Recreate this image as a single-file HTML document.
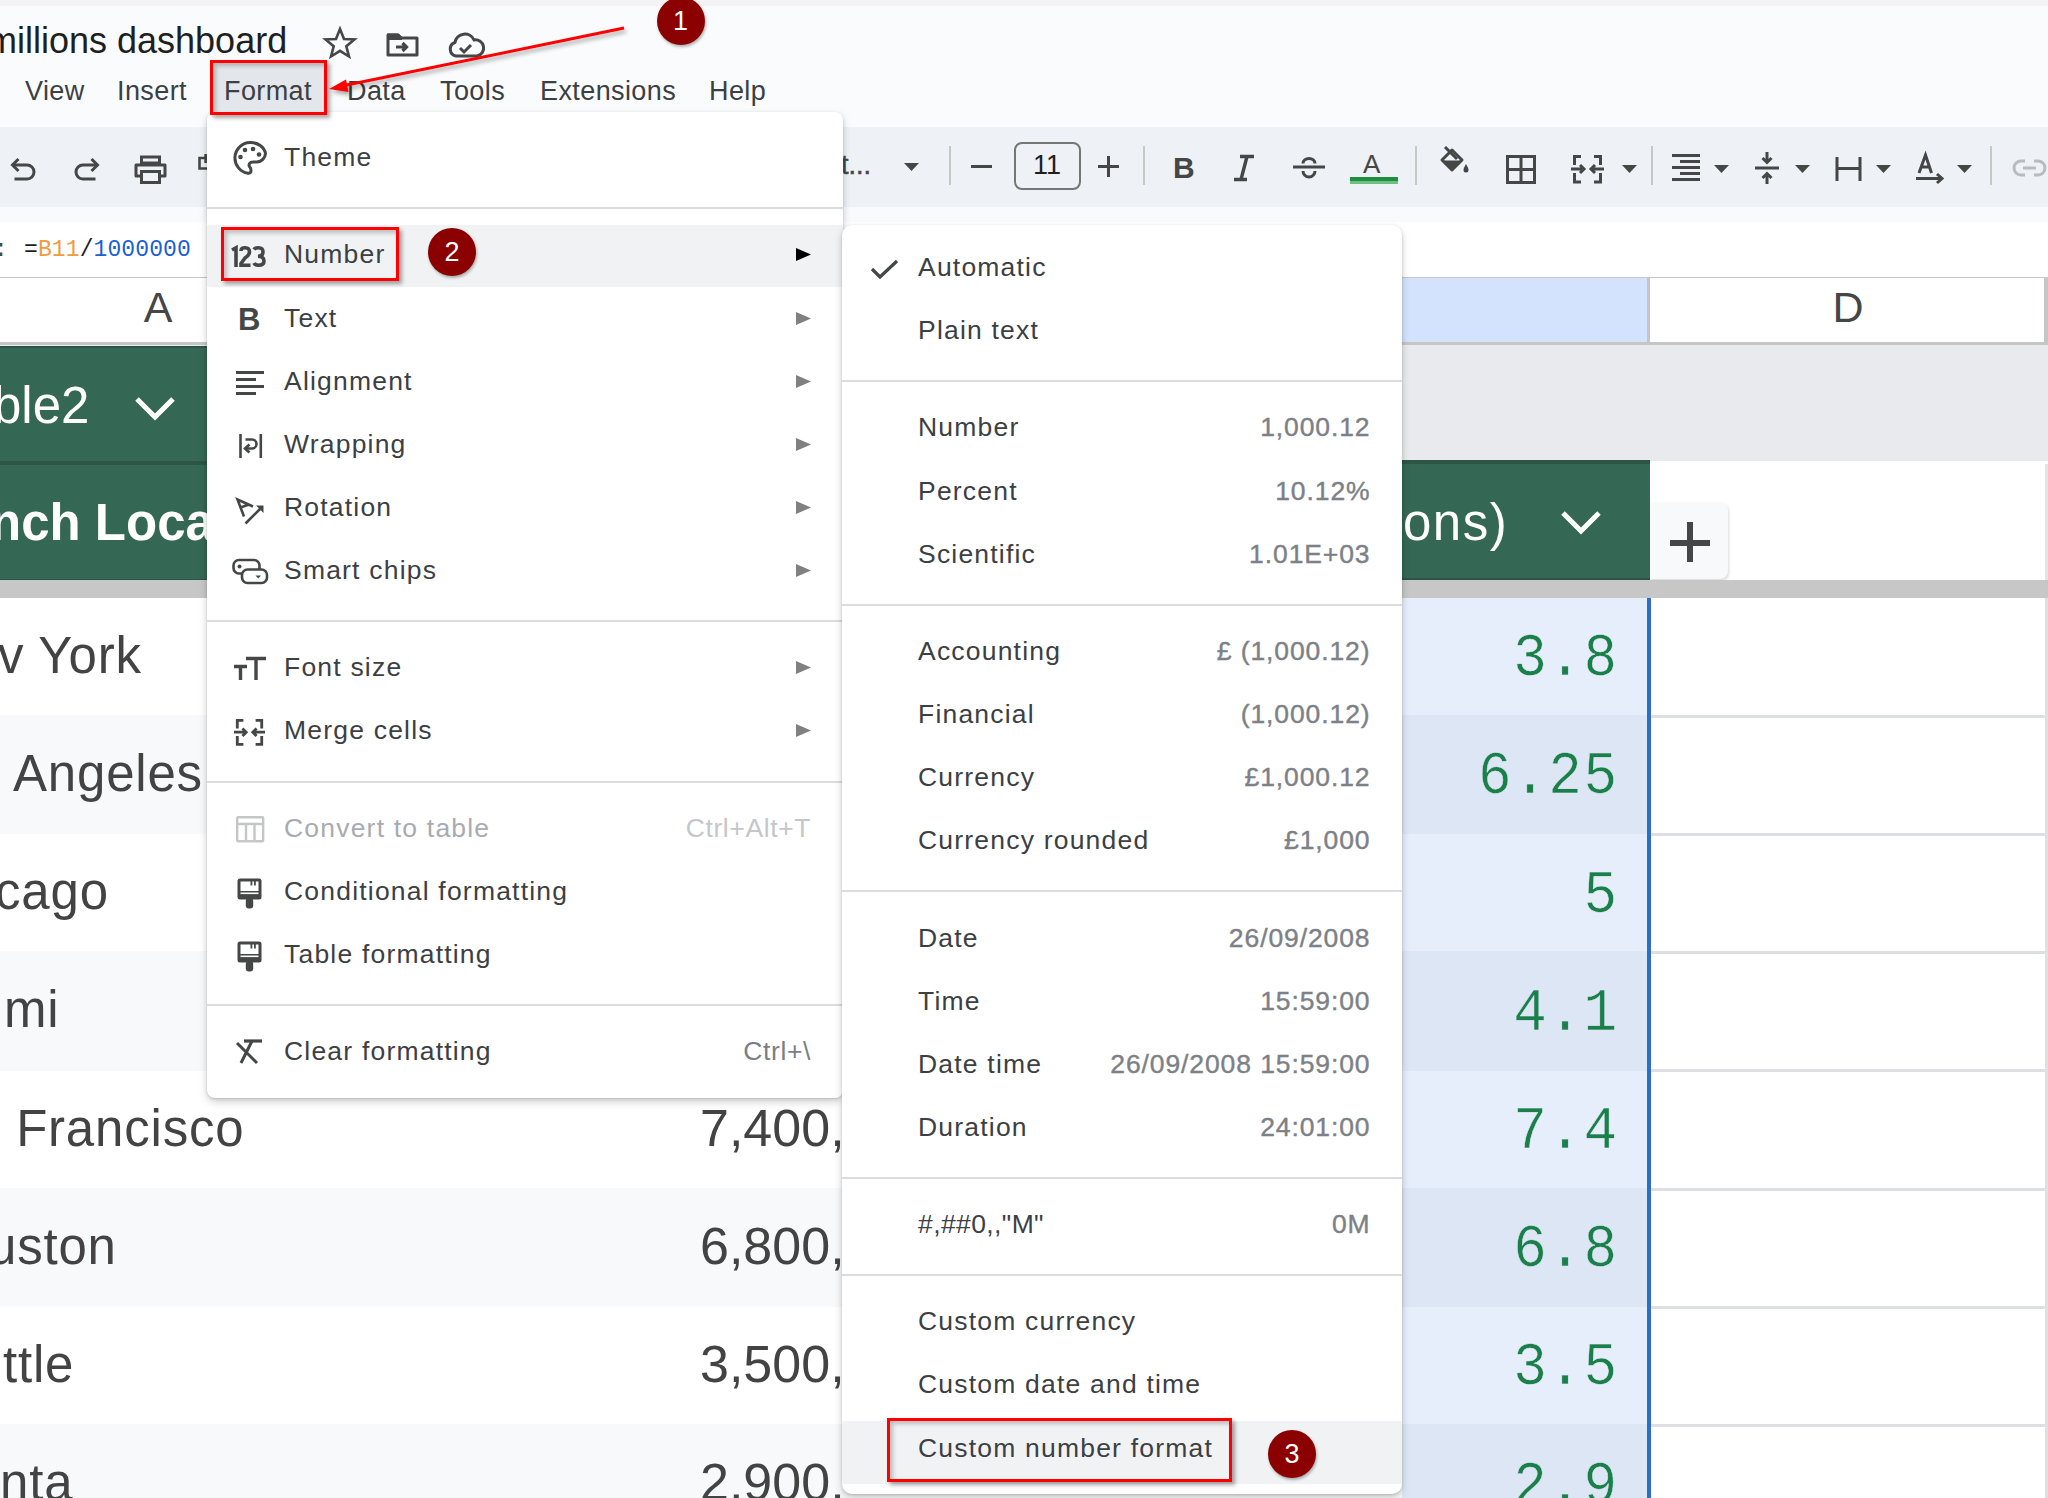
<!DOCTYPE html>
<html><head><meta charset="utf-8"><style>
html,body{margin:0;padding:0;width:2048px;height:1498px;overflow:hidden;background:#ffffff;font-family:'Liberation Sans', sans-serif;}
.r{position:absolute;box-sizing:border-box;}
svg.r{box-sizing:content-box;overflow:visible}
.t{position:absolute;line-height:1;white-space:nowrap;}
</style></head><body>
<div class="r" style="left:0px;top:0px;width:2048px;height:127px;background:#f9fbfd;"></div>
<div class="r" style="left:0px;top:0px;width:2048px;height:6px;background:#f3f3f6;"></div>
<div class="t" style="left:-13px;top:22.5px;font-size:36px;color:#1f1f1f;font-weight:400;letter-spacing:0px;font-family:'Liberation Sans', sans-serif;">millions dashboard</div>
<svg class="r" style="left:323px;top:26px;" width="34" height="32" viewBox="0 0 34 32"><path d="M17 3 L21 13 L31.5 13.5 L23.3 20.3 L26 30.5 L17 24.8 L8 30.5 L10.7 20.3 L2.5 13.5 L13 13 Z" fill="none" stroke="#444746" stroke-width="2.6" stroke-linejoin="miter"/></svg>
<svg class="r" style="left:386px;top:32px;" width="34" height="26" viewBox="0 0 34 26"><path d="M2 3 L12 3 L15 6 L31 6 L31 23 L2 23 Z" fill="none" stroke="#444746" stroke-width="3" stroke-linejoin="round"/><path d="M1 1.5 L12.5 1.5 L16 5 L16 8 L1 8 Z" fill="#444746"/><path d="M10 15 L20 15 M16.5 11 L20.5 15 L16.5 19" fill="none" stroke="#444746" stroke-width="3.2"/></svg>
<svg class="r" style="left:447px;top:32px;" width="38" height="27" viewBox="0 0 38 27"><path d="M9 24 A7 7 0 0 1 8 10.5 A10 10 0 0 1 27 8 A8 8 0 0 1 30 24 Z" fill="none" stroke="#444746" stroke-width="3" stroke-linejoin="round"/><path d="M13 16 L17 20 L24 13" fill="none" stroke="#444746" stroke-width="3"/></svg>
<div class="t" style="left:25px;top:78.1px;font-size:27px;color:#3c4043;font-weight:400;letter-spacing:0.4px;font-family:'Liberation Sans', sans-serif;">View</div>
<div class="t" style="left:117px;top:78.1px;font-size:27px;color:#3c4043;font-weight:400;letter-spacing:0.4px;font-family:'Liberation Sans', sans-serif;">Insert</div>
<div class="t" style="left:224px;top:78.1px;font-size:27px;color:#3c4043;font-weight:400;letter-spacing:0.4px;font-family:'Liberation Sans', sans-serif;">Format</div>
<div class="t" style="left:347px;top:78.1px;font-size:27px;color:#3c4043;font-weight:400;letter-spacing:0.4px;font-family:'Liberation Sans', sans-serif;">Data</div>
<div class="t" style="left:440px;top:78.1px;font-size:27px;color:#3c4043;font-weight:400;letter-spacing:0.4px;font-family:'Liberation Sans', sans-serif;">Tools</div>
<div class="t" style="left:540px;top:78.1px;font-size:27px;color:#3c4043;font-weight:400;letter-spacing:0.4px;font-family:'Liberation Sans', sans-serif;">Extensions</div>
<div class="t" style="left:709px;top:78.1px;font-size:27px;color:#3c4043;font-weight:400;letter-spacing:0.4px;font-family:'Liberation Sans', sans-serif;">Help</div>
<div class="r" style="left:0px;top:127px;width:2048px;height:80px;background:#eef1f6;"></div>
<div class="r" style="left:0px;top:207px;width:2048px;height:15px;background:#f8fafd;"></div>
<svg class="r" style="left:10px;top:157px;" width="27" height="25" viewBox="0 0 27 25"><path d="M8.5 2 L2.5 8 L8.5 14" fill="none" stroke="#444746" stroke-width="3"/><path d="M3 8 L17 8 A7 7 0 0 1 17 22 L4.5 22" fill="none" stroke="#444746" stroke-width="3"/></svg>
<svg class="r" style="left:73px;top:157px;" width="27" height="25" viewBox="0 0 27 25"><path d="M18.5 2 L24.5 8 L18.5 14" fill="none" stroke="#444746" stroke-width="3"/><path d="M24 8 L10 8 A7 7 0 0 0 10 22 L22.5 22" fill="none" stroke="#444746" stroke-width="3"/></svg>
<svg class="r" style="left:134px;top:155px;" width="33" height="30" viewBox="0 0 33 30"><rect x="7.5" y="2" width="18" height="6" fill="none" stroke="#444746" stroke-width="3"/><path d="M7 21 L2 21 L2 10 L31 10 L31 21 L26 21" fill="none" stroke="#444746" stroke-width="3" stroke-linejoin="round"/><rect x="7.5" y="16.5" width="18" height="11" fill="none" stroke="#444746" stroke-width="3"/></svg>
<svg class="r" style="left:195px;top:150px;" width="14" height="22" viewBox="0 0 14 22"><path d="M12 8 L4.5 8 L4.5 18.5 L12 18.5" fill="none" stroke="#444746" stroke-width="2.6"/><rect x="9.3" y="4" width="2.6" height="9" fill="#444746"/></svg>
<div class="t" style="left:841px;top:152.1px;font-size:27px;color:#444746;font-weight:400;letter-spacing:0px;font-family:'Liberation Sans', sans-serif;-webkit-text-stroke:0.5px #444746">t...</div>
<svg class="r" style="left:904px;top:163px;" width="15" height="8" viewBox="0 0 15 8"><path d="M0 0 L15 0 L7.5 8 Z" fill="#444746"/></svg>
<div class="r" style="left:949px;top:146px;width:2px;height:39px;background:#c7c7c7;"></div>
<div class="r" style="left:971px;top:165px;width:21px;height:3px;background:#444746;"></div>
<div class="r" style="left:1014px;top:142px;width:67px;height:48px;border:2px solid #747775;border-radius:8px;"></div>
<div class="t" style="left:1047px;top:152.1px;font-size:27px;color:#1f1f1f;font-weight:400;letter-spacing:0px;font-family:'Liberation Sans', sans-serif;width:0;display:flex;justify-content:center;">11</div>
<div class="r" style="left:1098px;top:165px;width:21px;height:3px;background:#444746;"></div>
<div class="r" style="left:1107px;top:156px;width:3px;height:21px;background:#444746;"></div>
<div class="r" style="left:1143px;top:146px;width:2px;height:39px;background:#c7c7c7;"></div>
<div class="t" style="left:1173px;top:153.1px;font-size:30px;color:#444746;font-weight:700;letter-spacing:0px;font-family:'Liberation Sans', sans-serif;">B</div>
<svg class="r" style="left:1232px;top:155px;" width="24" height="26" viewBox="0 0 24 26"><path d="M8 1.5 L22 1.5 M2 24.5 L15 24.5 M15 1.5 L9 24.5" fill="none" stroke="#444746" stroke-width="3.4"/></svg>
<svg class="r" style="left:1292px;top:156px;" width="34" height="25" viewBox="0 0 34 25"><path d="M1 11 L33 11" stroke="#444746" stroke-width="3"/><path d="M11 7.5 A6 5 0 0 1 23 7.5" fill="none" stroke="#444746" stroke-width="3"/><path d="M11 15 A6 6 0 0 0 23 15" fill="none" stroke="#444746" stroke-width="3"/></svg>
<div class="t" style="left:1363px;top:150.5px;font-size:26px;color:#444746;font-weight:400;letter-spacing:0px;font-family:'Liberation Sans', sans-serif;">A</div>
<div class="r" style="left:1350px;top:177px;width:48px;height:4px;background:#1e8e3e;"></div>
<div class="r" style="left:1350px;top:181px;width:48px;height:3px;background:#6fbf85;"></div>
<div class="r" style="left:1415px;top:146px;width:2px;height:39px;background:#c7c7c7;"></div>
<svg class="r" style="left:1440px;top:145px;" width="32" height="31" viewBox="0 0 32 31"><path d="M5 2 L17 14" stroke="#444746" stroke-width="3"/><path d="M2 15 L12 5 L22 15 L12 25 Z" fill="none" stroke="#444746" stroke-width="3" stroke-linejoin="round"/><path d="M3 15.5 L21 15.5 L12 25 Z" fill="#444746"/><path d="M26 19 Q23.5 23 23.5 25 A2.5 2.5 0 0 0 28.5 25 Q28.5 23 26 19 Z" fill="#444746"/></svg>
<svg class="r" style="left:1506px;top:155px;" width="30" height="29" viewBox="0 0 30 29"><rect x="1.5" y="1.5" width="27" height="26" fill="none" stroke="#444746" stroke-width="3"/><path d="M15 1.5 L15 27.5 M1.5 14.5 L28.5 14.5" stroke="#444746" stroke-width="3"/></svg>
<svg class="r" style="left:1571px;top:155px;" width="34" height="30" viewBox="0 0 34 30"><g transform="scale(1.0)" fill="none" stroke="#444746" stroke-width="3"><path d="M10 1.5 L3.5 1.5 L3.5 10 M3.5 18 L3.5 27 L10 27 M23 1.5 L29.5 1.5 L29.5 10 M29.5 18 L29.5 27 L23 27"/><path d="M0 14 L13 14 M9 10 L13 14 L9 18 M33 14 L20 14 M24 10 L20 14 L24 18"/></g></svg>
<svg class="r" style="left:1622px;top:165px;" width="15" height="8" viewBox="0 0 15 8"><path d="M0 0 L15 0 L7.5 8 Z" fill="#444746"/></svg>
<div class="r" style="left:1651px;top:146px;width:2px;height:39px;background:#c7c7c7;"></div>
<svg class="r" style="left:1672px;top:154px;" width="28" height="29" viewBox="0 0 28 29"><rect x="0" y="0" width="28" height="3" fill="#444746"/><rect x="8" y="6" width="20" height="3" fill="#444746"/><rect x="0" y="12" width="28" height="3" fill="#444746"/><rect x="8" y="18" width="20" height="3" fill="#444746"/><rect x="0" y="24" width="28" height="3" fill="#444746"/></svg>
<svg class="r" style="left:1714px;top:165px;" width="15" height="8" viewBox="0 0 15 8"><path d="M0 0 L15 0 L7.5 8 Z" fill="#444746"/></svg>
<svg class="r" style="left:1754px;top:151px;" width="26" height="33" viewBox="0 0 26 33"><path d="M1 17 L25 17" stroke="#444746" stroke-width="3"/><path d="M13 1 L13 11 M8.5 7 L13 11.5 L17.5 7" fill="none" stroke="#444746" stroke-width="3"/><path d="M13 33 L13 23 M8.5 27 L13 22.5 L17.5 27" fill="none" stroke="#444746" stroke-width="3"/></svg>
<svg class="r" style="left:1795px;top:165px;" width="15" height="8" viewBox="0 0 15 8"><path d="M0 0 L15 0 L7.5 8 Z" fill="#444746"/></svg>
<svg class="r" style="left:1835px;top:156px;" width="27" height="26" viewBox="0 0 27 26"><path d="M2 1 L2 25 M25 1 L25 25 M2 12.5 L25 12.5" stroke="#444746" stroke-width="3"/></svg>
<svg class="r" style="left:1876px;top:165px;" width="15" height="8" viewBox="0 0 15 8"><path d="M0 0 L15 0 L7.5 8 Z" fill="#444746"/></svg>
<svg class="r" style="left:1915px;top:153px;" width="30" height="30" viewBox="0 0 30 30"><path d="M4 20 L10.5 2 L16.5 20 M6.5 14 L14.5 14" fill="none" stroke="#444746" stroke-width="3"/><path d="M1 25.5 L26 25.5 M22 21 L27 25.5 L22 30" fill="none" stroke="#444746" stroke-width="3"/></svg>
<svg class="r" style="left:1957px;top:165px;" width="15" height="8" viewBox="0 0 15 8"><path d="M0 0 L15 0 L7.5 8 Z" fill="#444746"/></svg>
<div class="r" style="left:1990px;top:146px;width:2px;height:39px;background:#c7c7c7;"></div>
<svg class="r" style="left:2013px;top:159px;" width="35" height="19" viewBox="0 0 35 19"><path d="M12 2 L8 2 A7 7 0 0 0 8 16 L12 16 M21 2 L25 2 A7 7 0 0 1 25 16 L21 16 M10 9 L23 9" fill="none" stroke="#b9bbbe" stroke-width="3"/></svg>
<div class="r" style="left:0px;top:222px;width:2048px;height:55px;background:#ffffff;"></div>
<div class="r" style="left:0px;top:277px;width:2048px;height:1px;background:#c4c7c5;"></div>
<div class="t" style="left:-6px;top:239.4px;font-size:23px;color:#444746;font-weight:400;letter-spacing:0px;font-family:'Liberation Mono', monospace;">:</div>
<div class="t" style="left:24px;top:239.4px;font-size:23px;font-family:'Liberation Mono', monospace;color:#1f1f1f;letter-spacing:0.1px">=<span style="color:#f29b3c">B11</span>/<span style="color:#1a5fd6">1000000</span></div>
<div class="r" style="left:0px;top:278px;width:2048px;height:65px;background:#ffffff;"></div>
<div class="r" style="left:1402px;top:278px;width:246px;height:65px;background:#d3e3fd;"></div>
<div class="r" style="left:1647px;top:278px;width:3px;height:65px;background:#c4c7c5;"></div>
<div class="r" style="left:2044px;top:278px;width:4px;height:65px;background:#c4c7c5;"></div>
<div class="r" style="left:0px;top:342px;width:2048px;height:3px;background:#c4c7c5;"></div>
<div class="t" style="left:158px;top:286.1px;font-size:43px;color:#444746;font-weight:400;letter-spacing:0px;font-family:'Liberation Sans', sans-serif;width:0;display:flex;justify-content:center;">A</div>
<div class="t" style="left:1848px;top:286.1px;font-size:43px;color:#444746;font-weight:400;letter-spacing:0px;font-family:'Liberation Sans', sans-serif;width:0;display:flex;justify-content:center;">D</div>
<div class="r" style="left:0px;top:345px;width:2048px;height:116px;background:#e8eaed;"></div>
<div class="r" style="left:0px;top:346px;width:207px;height:115px;background:#356854;"></div>
<div class="r" style="left:0px;top:346px;width:207px;height:2px;background:#2c5545;"></div>
<div class="t" style="left:-7px;top:379.8px;font-size:51px;color:#ffffff;font-weight:400;letter-spacing:0px;font-family:'Liberation Sans', sans-serif;">ble2</div>
<svg class="r" style="left:134px;top:396px;" width="44" height="27" viewBox="0 0 44 27"><path d="M3 3 L21 21 L39 3" fill="none" stroke="#ffffff" stroke-width="5"/></svg>
<div class="r" style="left:0px;top:461px;width:2048px;height:117px;background:#ffffff;"></div>
<div class="r" style="left:0px;top:461px;width:207px;height:4px;background:#2c5545;"></div>
<div class="r" style="left:0px;top:465px;width:207px;height:115px;background:#356854;"></div>
<div class="r" style="left:0px;top:579px;width:207px;height:3px;background:#2c5545;"></div>
<div class="t" style="left:-10px;top:496.8px;font-size:51px;color:#ffffff;font-weight:700;letter-spacing:0px;font-family:'Liberation Sans', sans-serif;">nch Loca</div>
<div class="r" style="left:1402px;top:461px;width:248px;height:119px;background:#356854;"></div>
<div class="r" style="left:1402px;top:578px;width:248px;height:4px;background:#2c5545;"></div>
<div class="r" style="left:1402px;top:460px;width:248px;height:4px;background:#2c5545;"></div>
<div class="t" style="left:1403px;top:496.8px;font-size:51px;color:#ffffff;font-weight:400;letter-spacing:1.5px;font-family:'Liberation Sans', sans-serif;">ons)</div>
<svg class="r" style="left:1560px;top:510px;" width="44" height="27" viewBox="0 0 44 27"><path d="M3 3 L21 21 L39 3" fill="none" stroke="#ffffff" stroke-width="5"/></svg>
<div class="r" style="left:1650px;top:502px;width:78px;height:77px;background:#f8f9fb;border-radius:0 8px 8px 0;box-shadow:1px 2px 3px rgba(0,0,0,0.15)"></div>
<div class="r" style="left:1670px;top:539.5px;width:40px;height:6px;background:#444746;"></div>
<div class="r" style="left:1687px;top:522px;width:6px;height:40px;background:#444746;"></div>
<div class="r" style="left:0px;top:580px;width:2048px;height:18px;background:#c7c7c7;"></div>
<div class="r" style="left:0px;top:598.0px;width:1648px;height:119.2px;background:#ffffff;"></div>
<div class="r" style="left:1402px;top:598.0px;width:246px;height:119.2px;background:#e6eefb;"></div>
<div class="r" style="left:0px;top:714.7px;width:1648px;height:121.2px;background:#f8f9fa;"></div>
<div class="r" style="left:1402px;top:714.7px;width:246px;height:121.2px;background:#dce6f5;"></div>
<div class="r" style="left:0px;top:834.4px;width:1648px;height:119.2px;background:#ffffff;"></div>
<div class="r" style="left:1402px;top:834.4px;width:246px;height:119.2px;background:#e6eefb;"></div>
<div class="r" style="left:0px;top:951.1px;width:1648px;height:121.2px;background:#f8f9fa;"></div>
<div class="r" style="left:1402px;top:951.1px;width:246px;height:121.2px;background:#dce6f5;"></div>
<div class="r" style="left:0px;top:1070.8px;width:1648px;height:119.2px;background:#ffffff;"></div>
<div class="r" style="left:1402px;top:1070.8px;width:246px;height:119.2px;background:#e6eefb;"></div>
<div class="r" style="left:0px;top:1187.5px;width:1648px;height:121.2px;background:#f8f9fa;"></div>
<div class="r" style="left:1402px;top:1187.5px;width:246px;height:121.2px;background:#dce6f5;"></div>
<div class="r" style="left:0px;top:1307.2px;width:1648px;height:119.2px;background:#ffffff;"></div>
<div class="r" style="left:1402px;top:1307.2px;width:246px;height:119.2px;background:#e6eefb;"></div>
<div class="r" style="left:0px;top:1423.9px;width:1648px;height:121.2px;background:#f8f9fa;"></div>
<div class="r" style="left:1402px;top:1423.9px;width:246px;height:121.2px;background:#dce6f5;"></div>
<div class="r" style="left:1650px;top:598.0px;width:396px;height:119.2px;background:#ffffff;"></div>
<div class="r" style="left:1650px;top:716.2px;width:396px;height:119.2px;background:#ffffff;"></div>
<div class="r" style="left:1650px;top:834.4px;width:396px;height:119.2px;background:#ffffff;"></div>
<div class="r" style="left:1650px;top:952.6px;width:396px;height:119.2px;background:#ffffff;"></div>
<div class="r" style="left:1650px;top:1070.8px;width:396px;height:119.2px;background:#ffffff;"></div>
<div class="r" style="left:1650px;top:1189.0px;width:396px;height:119.2px;background:#ffffff;"></div>
<div class="r" style="left:1650px;top:1307.2px;width:396px;height:119.2px;background:#ffffff;"></div>
<div class="r" style="left:1650px;top:1425.4px;width:396px;height:119.2px;background:#ffffff;"></div>
<div class="r" style="left:1650px;top:714.7px;width:396px;height:3px;background:#dedfe0;"></div>
<div class="t" style="left:-2px;top:629.8px;font-size:51px;color:#434343;font-weight:400;letter-spacing:0.8px;font-family:'Liberation Sans', sans-serif;">v York</div>
<div class="t" style="right:429.5px;text-align:right;top:632.1px;font-size:56px;color:#1b7f4a;font-weight:400;letter-spacing:0px;font-family:'Liberation Mono', monospace;letter-spacing:1.5px;transform:scaleY(1.09);transform-origin:50% 43px;-webkit-text-stroke:0.5px #e6eefb">3.8</div>
<div class="r" style="left:1650px;top:832.9000000000001px;width:396px;height:3px;background:#dedfe0;"></div>
<div class="t" style="left:13px;top:748.0px;font-size:51px;color:#434343;font-weight:400;letter-spacing:0.8px;font-family:'Liberation Sans', sans-serif;">Angeles</div>
<div class="t" style="right:429.5px;text-align:right;top:750.3px;font-size:56px;color:#1b7f4a;font-weight:400;letter-spacing:0px;font-family:'Liberation Mono', monospace;letter-spacing:1.5px;transform:scaleY(1.09);transform-origin:50% 43px;-webkit-text-stroke:0.5px #dce6f5">6.25</div>
<div class="r" style="left:1650px;top:951.1px;width:396px;height:3px;background:#dedfe0;"></div>
<div class="t" style="left:-5px;top:866.2px;font-size:51px;color:#434343;font-weight:400;letter-spacing:0.8px;font-family:'Liberation Sans', sans-serif;">cago</div>
<div class="t" style="right:429.5px;text-align:right;top:868.5px;font-size:56px;color:#1b7f4a;font-weight:400;letter-spacing:0px;font-family:'Liberation Mono', monospace;letter-spacing:1.5px;transform:scaleY(1.09);transform-origin:50% 43px;-webkit-text-stroke:0.5px #e6eefb">5</div>
<div class="r" style="left:1650px;top:1069.3px;width:396px;height:3px;background:#dedfe0;"></div>
<div class="t" style="left:4px;top:984.4px;font-size:51px;color:#434343;font-weight:400;letter-spacing:0.8px;font-family:'Liberation Sans', sans-serif;">mi</div>
<div class="t" style="right:429.5px;text-align:right;top:986.7px;font-size:56px;color:#1b7f4a;font-weight:400;letter-spacing:0px;font-family:'Liberation Mono', monospace;letter-spacing:1.5px;transform:scaleY(1.09);transform-origin:50% 43px;-webkit-text-stroke:0.5px #dce6f5">4.1</div>
<div class="r" style="left:1650px;top:1187.5px;width:396px;height:3px;background:#dedfe0;"></div>
<div class="t" style="left:-28px;top:1102.6px;font-size:51px;color:#434343;font-weight:400;letter-spacing:0.8px;font-family:'Liberation Sans', sans-serif;">n Francisco</div>
<div class="t" style="left:700px;top:1101.8px;font-size:52px;color:#434343;font-weight:400;letter-spacing:0px;font-family:'Liberation Sans', sans-serif;">7,400,</div>
<div class="t" style="right:429.5px;text-align:right;top:1104.9px;font-size:56px;color:#1b7f4a;font-weight:400;letter-spacing:0px;font-family:'Liberation Mono', monospace;letter-spacing:1.5px;transform:scaleY(1.09);transform-origin:50% 43px;-webkit-text-stroke:0.5px #e6eefb">7.4</div>
<div class="r" style="left:1650px;top:1305.7px;width:396px;height:3px;background:#dedfe0;"></div>
<div class="t" style="left:-12px;top:1220.8px;font-size:51px;color:#434343;font-weight:400;letter-spacing:0.8px;font-family:'Liberation Sans', sans-serif;">uston</div>
<div class="t" style="left:700px;top:1220.0px;font-size:52px;color:#434343;font-weight:400;letter-spacing:0px;font-family:'Liberation Sans', sans-serif;">6,800,</div>
<div class="t" style="right:429.5px;text-align:right;top:1223.1px;font-size:56px;color:#1b7f4a;font-weight:400;letter-spacing:0px;font-family:'Liberation Mono', monospace;letter-spacing:1.5px;transform:scaleY(1.09);transform-origin:50% 43px;-webkit-text-stroke:0.5px #dce6f5">6.8</div>
<div class="r" style="left:1650px;top:1423.9px;width:396px;height:3px;background:#dedfe0;"></div>
<div class="t" style="left:3px;top:1339.0px;font-size:51px;color:#434343;font-weight:400;letter-spacing:0.8px;font-family:'Liberation Sans', sans-serif;">ttle</div>
<div class="t" style="left:700px;top:1338.2px;font-size:52px;color:#434343;font-weight:400;letter-spacing:0px;font-family:'Liberation Sans', sans-serif;">3,500,</div>
<div class="t" style="right:429.5px;text-align:right;top:1341.3px;font-size:56px;color:#1b7f4a;font-weight:400;letter-spacing:0px;font-family:'Liberation Mono', monospace;letter-spacing:1.5px;transform:scaleY(1.09);transform-origin:50% 43px;-webkit-text-stroke:0.5px #e6eefb">3.5</div>
<div class="r" style="left:1650px;top:1542.1000000000001px;width:396px;height:3px;background:#dedfe0;"></div>
<div class="t" style="left:0px;top:1457.2px;font-size:51px;color:#434343;font-weight:400;letter-spacing:0.8px;font-family:'Liberation Sans', sans-serif;">nta</div>
<div class="t" style="left:700px;top:1456.4px;font-size:52px;color:#434343;font-weight:400;letter-spacing:0px;font-family:'Liberation Sans', sans-serif;">2,900,</div>
<div class="t" style="right:429.5px;text-align:right;top:1459.5px;font-size:56px;color:#1b7f4a;font-weight:400;letter-spacing:0px;font-family:'Liberation Mono', monospace;letter-spacing:1.5px;transform:scaleY(1.09);transform-origin:50% 43px;-webkit-text-stroke:0.5px #dce6f5">2.9</div>
<div class="r" style="left:2045px;top:598px;width:3px;height:900px;background:#dfe0e1;"></div>
<div class="r" style="left:2045px;top:464px;width:3px;height:116px;background:#e3e4e5;"></div>
<div class="r" style="left:1647px;top:598px;width:4px;height:900px;background:#2d6ec6;"></div>
<div class="r" style="left:207px;top:112px;width:636px;height:986px;background:#ffffff;border-radius:8px;box-shadow:0 4px 8px rgba(0,0,0,0.18), 0 1px 3px rgba(0,0,0,0.15)"></div>
<div class="r" style="left:207px;top:207px;width:636px;height:2px;background:#dadce0;"></div>
<div class="r" style="left:207px;top:620px;width:636px;height:2px;background:#dadce0;"></div>
<div class="r" style="left:207px;top:781px;width:636px;height:2px;background:#dadce0;"></div>
<div class="r" style="left:207px;top:1004px;width:636px;height:2px;background:#dadce0;"></div>
<div class="r" style="left:207px;top:225px;width:636px;height:62px;background:#f1f2f4;"></div>
<div class="t" style="left:284px;top:144.4px;font-size:26.5px;color:#3c4043;font-weight:400;letter-spacing:1.2px;font-family:'Liberation Sans', sans-serif;">Theme</div>
<svg class="r" style="left:232px;top:140px;" width="36" height="36" viewBox="0 0 36 36"><path d="M18 2.5 A15.5 15.5 0 0 0 16 33.3 Q19 33.5 19 30.5 Q19 28 17.8 27 Q16.5 25.5 17.5 23.5 Q18.5 22 21 22 L25 22 A9 9 0 0 0 33.5 13.5 A15.5 13 0 0 0 18 2.5 Z" fill="none" stroke="#444746" stroke-width="3"/><circle cx="8.5" cy="17" r="2.3" fill="#444746"/><circle cx="13" cy="10" r="2.3" fill="#444746"/><circle cx="21" cy="9" r="2.3" fill="#444746"/><circle cx="27" cy="14.5" r="2.3" fill="#444746"/></svg>
<div class="t" style="left:284px;top:241.4px;font-size:26.5px;color:#3c4043;font-weight:400;letter-spacing:1.2px;font-family:'Liberation Sans', sans-serif;">Number</div>
<svg class="r" style="left:796px;top:247.5px;" width="15" height="13" viewBox="0 0 15 13"><path d="M0 0 L15 6.5 L0 13 Z" fill="#000000"/></svg>
<svg class="r" style="left:231px;top:246px;" width="36" height="21" viewBox="0 0 36 21"><g fill="none" stroke="#444746" stroke-width="3.6" stroke-linejoin="miter"><path d="M1 4 L5 1.8 L5 21"/><path d="M10 5 Q10 1.8 14 1.8 Q18.5 1.8 18.5 6 Q18.5 9 14 12 L10 17.5 L10 19.2 L19.5 19.2"/><path d="M23 3.5 Q24 1.8 27.5 1.8 Q32 1.8 32 6 Q32 10 27 10.2 Q33 10.2 33 15 Q33 19.2 27.5 19.2 Q24 19.2 23 17"/></g></svg>
<div class="t" style="left:284px;top:305.4px;font-size:26.5px;color:#3c4043;font-weight:400;letter-spacing:1.2px;font-family:'Liberation Sans', sans-serif;">Text</div>
<svg class="r" style="left:796px;top:311.5px;" width="15" height="13" viewBox="0 0 15 13"><path d="M0 0 L15 6.5 L0 13 Z" fill="#808080"/></svg>
<div class="t" style="left:238px;top:303.8px;font-size:31px;color:#444746;font-weight:700;letter-spacing:0px;font-family:'Liberation Sans', sans-serif;">B</div>
<div class="t" style="left:284px;top:368.4px;font-size:26.5px;color:#3c4043;font-weight:400;letter-spacing:1.2px;font-family:'Liberation Sans', sans-serif;">Alignment</div>
<svg class="r" style="left:796px;top:374.5px;" width="15" height="13" viewBox="0 0 15 13"><path d="M0 0 L15 6.5 L0 13 Z" fill="#808080"/></svg>
<svg class="r" style="left:236px;top:371px;" width="29" height="24" viewBox="0 0 29 24"><rect x="0" y="0" width="28" height="3" fill="#444746"/><rect x="0" y="7" width="20" height="3" fill="#444746"/><rect x="0" y="14" width="28" height="3" fill="#444746"/><rect x="0" y="21" width="20" height="3" fill="#444746"/></svg>
<div class="t" style="left:284px;top:431.4px;font-size:26.5px;color:#3c4043;font-weight:400;letter-spacing:1.2px;font-family:'Liberation Sans', sans-serif;">Wrapping</div>
<svg class="r" style="left:796px;top:437.5px;" width="15" height="13" viewBox="0 0 15 13"><path d="M0 0 L15 6.5 L0 13 Z" fill="#808080"/></svg>
<svg class="r" style="left:236px;top:432px;" width="28" height="28" viewBox="0 0 28 28"><path d="M4.5 2 L4.5 26 M24.8 2 L24.8 26" stroke="#444746" stroke-width="2.6"/><path d="M9.5 7.5 L16 7.5 A4.5 4.5 0 0 1 16 16.5 L10 16.5" fill="none" stroke="#444746" stroke-width="2.6"/><path d="M13.5 12.5 L9 16.5 L13.5 20.5" fill="none" stroke="#444746" stroke-width="2.6"/></svg>
<div class="t" style="left:284px;top:494.4px;font-size:26.5px;color:#3c4043;font-weight:400;letter-spacing:1.2px;font-family:'Liberation Sans', sans-serif;">Rotation</div>
<svg class="r" style="left:796px;top:500.5px;" width="15" height="13" viewBox="0 0 15 13"><path d="M0 0 L15 6.5 L0 13 Z" fill="#808080"/></svg>
<svg class="r" style="left:234px;top:494px;" width="32" height="30" viewBox="0 0 32 30"><path d="M10 22.5 L3.5 5.5 L19 12.5 M6.5 13.5 L15 10.5" fill="none" stroke="#444746" stroke-width="2.6" stroke-linejoin="miter"/><path d="M11.5 29.5 L26 15" stroke="#444746" stroke-width="2.6"/><path d="M22 11.5 L29.5 11.5 L29.5 19 Z" fill="#444746"/></svg>
<div class="t" style="left:284px;top:557.4px;font-size:26.5px;color:#3c4043;font-weight:400;letter-spacing:1.2px;font-family:'Liberation Sans', sans-serif;">Smart chips</div>
<svg class="r" style="left:796px;top:563.5px;" width="15" height="13" viewBox="0 0 15 13"><path d="M0 0 L15 6.5 L0 13 Z" fill="#808080"/></svg>
<svg class="r" style="left:231px;top:558px;" width="38" height="27" viewBox="0 0 38 27"><rect x="2.5" y="2" width="26" height="13.5" rx="5.5" fill="none" stroke="#444746" stroke-width="2.6"/><rect x="11" y="11.5" width="25" height="13.5" rx="5.5" fill="#ffffff" stroke="#444746" stroke-width="2.6"/><circle cx="8.5" cy="8.5" r="2" fill="#444746"/><path d="M24.5 17.5 L30 17.5 L27.25 20.5 Z" fill="#444746"/></svg>
<div class="t" style="left:284px;top:654.4px;font-size:26.5px;color:#3c4043;font-weight:400;letter-spacing:1.2px;font-family:'Liberation Sans', sans-serif;">Font size</div>
<svg class="r" style="left:796px;top:660.5px;" width="15" height="13" viewBox="0 0 15 13"><path d="M0 0 L15 6.5 L0 13 Z" fill="#808080"/></svg>
<svg class="r" style="left:233px;top:654px;" width="33" height="27" viewBox="0 0 33 27"><path d="M13 4.5 L33 4.5 M23 4.5 L23 26" stroke="#444746" stroke-width="3.4"/><path d="M1 12.5 L14 12.5 M7.5 12.5 L7.5 26" stroke="#444746" stroke-width="3.4"/></svg>
<div class="t" style="left:284px;top:717.4px;font-size:26.5px;color:#3c4043;font-weight:400;letter-spacing:1.2px;font-family:'Liberation Sans', sans-serif;">Merge cells</div>
<svg class="r" style="left:796px;top:723.5px;" width="15" height="13" viewBox="0 0 15 13"><path d="M0 0 L15 6.5 L0 13 Z" fill="#808080"/></svg>
<svg class="r" style="left:234px;top:719px;" width="32" height="28" viewBox="0 0 32 28"><g transform="scale(0.94)" fill="none" stroke="#444746" stroke-width="3"><path d="M10 1.5 L3.5 1.5 L3.5 10 M3.5 18 L3.5 27 L10 27 M23 1.5 L29.5 1.5 L29.5 10 M29.5 18 L29.5 27 L23 27"/><path d="M0 14 L13 14 M9 10 L13 14 L9 18 M33 14 L20 14 M24 10 L20 14 L24 18"/></g></svg>
<div class="t" style="left:284px;top:815.4px;font-size:26.5px;color:#a8abb0;font-weight:400;letter-spacing:1.2px;font-family:'Liberation Sans', sans-serif;">Convert to table</div>
<div class="t" style="right:1237px;text-align:right;top:815.4px;font-size:26.5px;color:#c4c6c9;font-weight:400;letter-spacing:0.6px;font-family:'Liberation Sans', sans-serif;">Ctrl+Alt+T</div>
<svg class="r" style="left:236px;top:816px;" width="29" height="27" viewBox="0 0 29 27"><rect x="1.2" y="1.2" width="26" height="24" rx="1" fill="none" stroke="#c4c7c5" stroke-width="2.4"/><path d="M1.2 8 L27 8 M10 8 L10 25 M18.5 8 L18.5 25" stroke="#c4c7c5" stroke-width="2.4"/></svg>
<div class="t" style="left:284px;top:878.4px;font-size:26.5px;color:#3c4043;font-weight:400;letter-spacing:1.2px;font-family:'Liberation Sans', sans-serif;">Conditional formatting</div>
<svg class="r" style="left:237px;top:878px;" width="25" height="31" viewBox="0 0 25 31"><rect x="0.5" y="0.5" width="24" height="21" rx="2.5" fill="#444746"/><rect x="3.5" y="3.5" width="18" height="9.5" fill="#ffffff"/><rect x="3.5" y="14.5" width="18" height="1.6" fill="#ffffff"/><rect x="13.5" y="3" width="1.8" height="4.5" fill="#444746"/><rect x="17" y="3" width="1.8" height="4.5" fill="#444746"/><rect x="8.8" y="20" width="7.4" height="10.5" rx="3" fill="#444746"/></svg>
<div class="t" style="left:284px;top:941.4px;font-size:26.5px;color:#3c4043;font-weight:400;letter-spacing:1.2px;font-family:'Liberation Sans', sans-serif;">Table formatting</div>
<svg class="r" style="left:237px;top:941px;" width="25" height="31" viewBox="0 0 25 31"><rect x="0.5" y="0.5" width="24" height="21" rx="2.5" fill="#444746"/><rect x="3.5" y="3.5" width="18" height="9.5" fill="#ffffff"/><rect x="3.5" y="14.5" width="18" height="1.6" fill="#ffffff"/><rect x="13.5" y="3" width="1.8" height="4.5" fill="#444746"/><rect x="17" y="3" width="1.8" height="4.5" fill="#444746"/><rect x="8.8" y="20" width="7.4" height="10.5" rx="3" fill="#444746"/></svg>
<div class="t" style="left:284px;top:1038.4px;font-size:26.5px;color:#3c4043;font-weight:400;letter-spacing:1.2px;font-family:'Liberation Sans', sans-serif;">Clear formatting</div>
<div class="t" style="right:1237px;text-align:right;top:1038.4px;font-size:26.5px;color:#7a7f84;font-weight:400;letter-spacing:0.6px;font-family:'Liberation Sans', sans-serif;">Ctrl+\</div>
<svg class="r" style="left:235px;top:1039px;" width="28" height="25" viewBox="0 0 28 25"><path d="M9 2 L27 2" stroke="#444746" stroke-width="3.2"/><path d="M2 4 L22 24 M17 2 L6 24" stroke="#444746" stroke-width="3"/></svg>
<div class="r" style="left:221px;top:227px;width:178px;height:54px;border:3.5px solid #ff0000;box-shadow:inset 3px 3px 4px rgba(0,0,0,0.22), 3px 3px 4px rgba(0,0,0,0.35)"></div>
<div class="r" style="left:842px;top:225px;width:560px;height:1269px;background:#ffffff;border-radius:10px;box-shadow:0 4px 8px rgba(0,0,0,0.18), 0 1px 3px rgba(0,0,0,0.15)"></div>
<div class="r" style="left:842px;top:380px;width:560px;height:2px;background:#dadce0;"></div>
<div class="r" style="left:842px;top:603.5px;width:560px;height:2px;background:#dadce0;"></div>
<div class="r" style="left:842px;top:890px;width:560px;height:2px;background:#dadce0;"></div>
<div class="r" style="left:842px;top:1176.5px;width:560px;height:2px;background:#dadce0;"></div>
<div class="r" style="left:842px;top:1274px;width:560px;height:2px;background:#dadce0;"></div>
<div class="r" style="left:842px;top:1421px;width:560px;height:63px;background:#f1f2f4;"></div>
<div class="t" style="left:918px;top:254.4px;font-size:26.5px;color:#3c4043;font-weight:400;letter-spacing:1.2px;font-family:'Liberation Sans', sans-serif;">Automatic</div>
<div class="t" style="left:918px;top:317.4px;font-size:26.5px;color:#3c4043;font-weight:400;letter-spacing:1.2px;font-family:'Liberation Sans', sans-serif;">Plain text</div>
<div class="t" style="left:918px;top:414.4px;font-size:26.5px;color:#3c4043;font-weight:400;letter-spacing:1.2px;font-family:'Liberation Sans', sans-serif;">Number</div>
<div class="t" style="right:677.5px;text-align:right;top:414.4px;font-size:26.5px;color:#7d8186;font-weight:400;letter-spacing:0.9px;font-family:'Liberation Sans', sans-serif;-webkit-text-stroke:0.4px #7d8186">1,000.12</div>
<div class="t" style="left:918px;top:478.4px;font-size:26.5px;color:#3c4043;font-weight:400;letter-spacing:1.2px;font-family:'Liberation Sans', sans-serif;">Percent</div>
<div class="t" style="right:677.5px;text-align:right;top:478.4px;font-size:26.5px;color:#7d8186;font-weight:400;letter-spacing:0.9px;font-family:'Liberation Sans', sans-serif;-webkit-text-stroke:0.4px #7d8186">10.12%</div>
<div class="t" style="left:918px;top:541.4px;font-size:26.5px;color:#3c4043;font-weight:400;letter-spacing:1.2px;font-family:'Liberation Sans', sans-serif;">Scientific</div>
<div class="t" style="right:677.5px;text-align:right;top:541.4px;font-size:26.5px;color:#7d8186;font-weight:400;letter-spacing:0.9px;font-family:'Liberation Sans', sans-serif;-webkit-text-stroke:0.4px #7d8186">1.01E+03</div>
<div class="t" style="left:918px;top:638.4px;font-size:26.5px;color:#3c4043;font-weight:400;letter-spacing:1.2px;font-family:'Liberation Sans', sans-serif;">Accounting</div>
<div class="t" style="right:677.5px;text-align:right;top:638.4px;font-size:26.5px;color:#7d8186;font-weight:400;letter-spacing:0.9px;font-family:'Liberation Sans', sans-serif;-webkit-text-stroke:0.4px #7d8186">£ (1,000.12)</div>
<div class="t" style="left:918px;top:701.4px;font-size:26.5px;color:#3c4043;font-weight:400;letter-spacing:1.2px;font-family:'Liberation Sans', sans-serif;">Financial</div>
<div class="t" style="right:677.5px;text-align:right;top:701.4px;font-size:26.5px;color:#7d8186;font-weight:400;letter-spacing:0.9px;font-family:'Liberation Sans', sans-serif;-webkit-text-stroke:0.4px #7d8186">(1,000.12)</div>
<div class="t" style="left:918px;top:764.4px;font-size:26.5px;color:#3c4043;font-weight:400;letter-spacing:1.2px;font-family:'Liberation Sans', sans-serif;">Currency</div>
<div class="t" style="right:677.5px;text-align:right;top:764.4px;font-size:26.5px;color:#7d8186;font-weight:400;letter-spacing:0.9px;font-family:'Liberation Sans', sans-serif;-webkit-text-stroke:0.4px #7d8186">£1,000.12</div>
<div class="t" style="left:918px;top:827.4px;font-size:26.5px;color:#3c4043;font-weight:400;letter-spacing:1.2px;font-family:'Liberation Sans', sans-serif;">Currency rounded</div>
<div class="t" style="right:677.5px;text-align:right;top:827.4px;font-size:26.5px;color:#7d8186;font-weight:400;letter-spacing:0.9px;font-family:'Liberation Sans', sans-serif;-webkit-text-stroke:0.4px #7d8186">£1,000</div>
<div class="t" style="left:918px;top:925.4px;font-size:26.5px;color:#3c4043;font-weight:400;letter-spacing:1.2px;font-family:'Liberation Sans', sans-serif;">Date</div>
<div class="t" style="right:677.5px;text-align:right;top:925.4px;font-size:26.5px;color:#7d8186;font-weight:400;letter-spacing:0.9px;font-family:'Liberation Sans', sans-serif;-webkit-text-stroke:0.4px #7d8186">26/09/2008</div>
<div class="t" style="left:918px;top:988.4px;font-size:26.5px;color:#3c4043;font-weight:400;letter-spacing:1.2px;font-family:'Liberation Sans', sans-serif;">Time</div>
<div class="t" style="right:677.5px;text-align:right;top:988.4px;font-size:26.5px;color:#7d8186;font-weight:400;letter-spacing:0.9px;font-family:'Liberation Sans', sans-serif;-webkit-text-stroke:0.4px #7d8186">15:59:00</div>
<div class="t" style="left:918px;top:1051.4px;font-size:26.5px;color:#3c4043;font-weight:400;letter-spacing:1.2px;font-family:'Liberation Sans', sans-serif;">Date time</div>
<div class="t" style="right:677.5px;text-align:right;top:1051.4px;font-size:26.5px;color:#7d8186;font-weight:400;letter-spacing:0.9px;font-family:'Liberation Sans', sans-serif;-webkit-text-stroke:0.4px #7d8186">26/09/2008 15:59:00</div>
<div class="t" style="left:918px;top:1114.4px;font-size:26.5px;color:#3c4043;font-weight:400;letter-spacing:1.2px;font-family:'Liberation Sans', sans-serif;">Duration</div>
<div class="t" style="right:677.5px;text-align:right;top:1114.4px;font-size:26.5px;color:#7d8186;font-weight:400;letter-spacing:0.9px;font-family:'Liberation Sans', sans-serif;-webkit-text-stroke:0.4px #7d8186">24:01:00</div>
<div class="t" style="left:918px;top:1211.4px;font-size:26.5px;color:#3c4043;font-weight:400;letter-spacing:0.4px;font-family:'Liberation Sans', sans-serif;">#,##0,,"M"</div>
<div class="t" style="right:677.5px;text-align:right;top:1211.4px;font-size:26.5px;color:#7d8186;font-weight:400;letter-spacing:0.9px;font-family:'Liberation Sans', sans-serif;-webkit-text-stroke:0.4px #7d8186">0M</div>
<div class="t" style="left:918px;top:1308.4px;font-size:26.5px;color:#3c4043;font-weight:400;letter-spacing:1.2px;font-family:'Liberation Sans', sans-serif;">Custom currency</div>
<div class="t" style="left:918px;top:1371.4px;font-size:26.5px;color:#3c4043;font-weight:400;letter-spacing:1.2px;font-family:'Liberation Sans', sans-serif;">Custom date and time</div>
<div class="t" style="left:918px;top:1435.4px;font-size:26.5px;color:#3c4043;font-weight:400;letter-spacing:1.2px;font-family:'Liberation Sans', sans-serif;">Custom number format</div>
<svg class="r" style="left:870px;top:259px;" width="30" height="22" viewBox="0 0 30 22"><path d="M2 10 L10 18 L27 2" fill="none" stroke="#444746" stroke-width="3.2"/></svg>
<div class="r" style="left:887px;top:1418px;width:345px;height:64px;border:3.5px solid #ff0000;box-shadow:inset 3px 3px 4px rgba(0,0,0,0.22), 3px 3px 4px rgba(0,0,0,0.35)"></div>
<div class="r" style="left:210px;top:60px;width:117px;height:55px;border:3.5px solid #ff0000;background:#e3e6ea;box-shadow:inset 3px 3px 4px rgba(0,0,0,0.22), 3px 3px 4px rgba(0,0,0,0.35)"></div>
<div class="t" style="left:224px;top:78.1px;font-size:27px;color:#3c4043;font-weight:400;letter-spacing:0.4px;font-family:'Liberation Sans', sans-serif;">Format</div>
<svg class="r" style="left:300px;top:15px;" width="340" height="90" viewBox="0 0 340 90"><defs><filter id="sh" x="-10%" y="-50%" width="120%" height="200%"><feDropShadow dx="2" dy="3" stdDeviation="2" flood-color="#000" flood-opacity="0.35"/></filter></defs><g filter="url(#sh)"><path d="M324 13 L42 71" stroke="#ff0000" stroke-width="3"/><path d="M29 74 L46 64.5 L48.5 77 Z" fill="#ff0000"/></g></svg>
<div class="r" style="left:656.5px;top:-3.5px;width:48px;height:48px;border-radius:50%;background:#8b0000;box-shadow:1px 2px 3px rgba(0,0,0,0.3)"></div>
<div class="t" style="left:680.5px;top:7.6px;font-size:27px;color:#ffffff;font-weight:400;letter-spacing:0px;font-family:'Liberation Sans', sans-serif;width:0;display:flex;justify-content:center;">1</div>
<div class="r" style="left:428px;top:228px;width:48px;height:48px;border-radius:50%;background:#8b0000;box-shadow:1px 2px 3px rgba(0,0,0,0.3)"></div>
<div class="t" style="left:452px;top:239.1px;font-size:27px;color:#ffffff;font-weight:400;letter-spacing:0px;font-family:'Liberation Sans', sans-serif;width:0;display:flex;justify-content:center;">2</div>
<div class="r" style="left:1268px;top:1430px;width:48px;height:48px;border-radius:50%;background:#8b0000;box-shadow:1px 2px 3px rgba(0,0,0,0.3)"></div>
<div class="t" style="left:1292px;top:1441.1px;font-size:27px;color:#ffffff;font-weight:400;letter-spacing:0px;font-family:'Liberation Sans', sans-serif;width:0;display:flex;justify-content:center;">3</div>
</body></html>
